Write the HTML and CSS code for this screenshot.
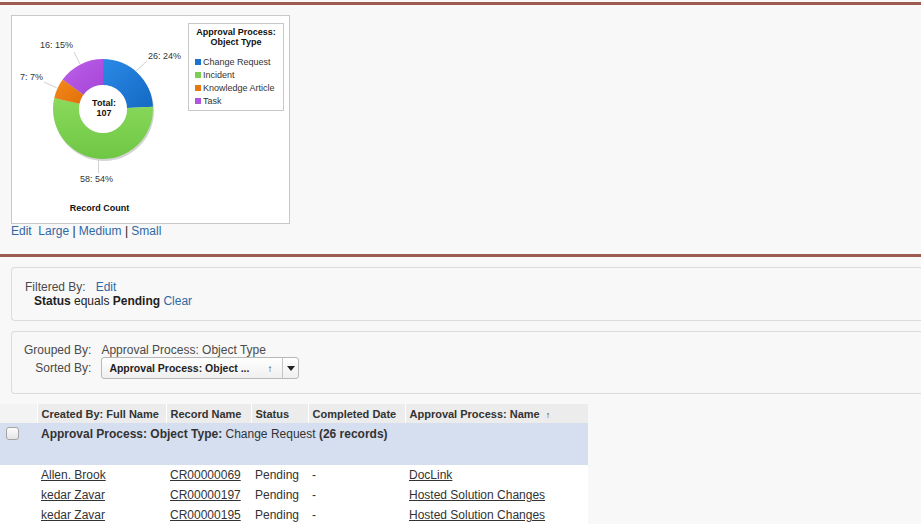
FILE: index.html
```html
<!DOCTYPE html>
<html>
<head>
<meta charset="utf-8">
<link rel="stylesheet" href="styles.css">
</head>
<body>
<div class="chart-panel">
  <div class="chart-box">
    <svg class="chart" width="277" height="207" viewBox="0 0 277 207">
      <defs>
        <linearGradient id="gBlue" x1="0" y1="0" x2="1" y2="1">
          <stop offset="0" stop-color="#2a8ae6"/><stop offset="1" stop-color="#1469c4"/>
        </linearGradient>
        <linearGradient id="gGreen" x1="0" y1="0" x2="0" y2="1">
          <stop offset="0" stop-color="#8ad95c"/><stop offset="1" stop-color="#6fc744"/>
        </linearGradient>
        <linearGradient id="gOrange" x1="0" y1="0" x2="1" y2="1">
          <stop offset="0" stop-color="#f58a1e"/><stop offset="1" stop-color="#e06f06"/>
        </linearGradient>
        <linearGradient id="gPurple" x1="0" y1="0" x2="1" y2="1">
          <stop offset="0" stop-color="#bd61ea"/><stop offset="1" stop-color="#a444d6"/>
        </linearGradient>
      </defs>
      <circle cx="92" cy="95" r="50" fill="#d4d4d4"/>
      <path d="M91,43 A50,50 0 0 1 140.95,90.80 L114.98,91.94 A24,24 0 0 0 91,69 Z" fill="url(#gBlue)"/>
      <path d="M140.95,90.80 A50,50 0 1 1 42.20,82.09 L67.58,87.76 A24,24 0 1 0 114.98,91.94 Z" fill="url(#gGreen)"/>
      <path d="M42.20,82.09 A50,50 0 0 1 50.65,63.47 L71.63,78.83 A24,24 0 0 0 67.58,87.76 Z" fill="url(#gOrange)"/>
      <path d="M50.65,63.47 A50,50 0 0 1 91,43 L91,69 A24,24 0 0 0 71.63,78.83 Z" fill="url(#gPurple)"/>
      <circle cx="91" cy="93" r="24" fill="#ffffff"/>
      <g stroke="#d0d0d0" stroke-width="1" fill="none">
        <line x1="124" y1="55" x2="135" y2="45"/>
        <line x1="62" y1="36" x2="68" y2="48"/>
        <line x1="32" y1="66" x2="45" y2="72"/>
        <line x1="86.5" y1="143" x2="86.5" y2="157"/>
      </g>
      <g class="lbl">
        <text x="136" y="43">26: 24%</text>
        <text x="28" y="32">16: 15%</text>
        <text x="8" y="64">7: 7%</text>
        <text x="68" y="166">58: 54%</text>
      </g>
      <g class="bold mid">
        <text x="92" y="90">Total:</text>
        <text x="92" y="100">107</text>
        <text x="87.5" y="195">Record Count</text>
      </g>
      <rect x="176.5" y="7.5" width="95" height="87" fill="#fff" stroke="#c8c8c8"/>
      <g class="bold mid">
        <text x="224" y="19">Approval Process:</text>
        <text x="224" y="29">Object Type</text>
      </g>
      <rect x="183" y="43" width="6" height="6" fill="#1a73cf"/>
      <rect x="183" y="56" width="6" height="6" fill="#7bcf52"/>
      <rect x="183" y="69" width="6" height="6" fill="#e8780c"/>
      <rect x="183" y="82" width="6" height="6" fill="#b154df"/>
      <g class="lbl">
        <text x="191" y="49">Change Request</text>
        <text x="191" y="62">Incident</text>
        <text x="191" y="75">Knowledge Article</text>
        <text x="191" y="88">Task</text>
      </g>
    </svg>
  </div>
  <div class="size-links">
    <a class="link">Edit</a>&nbsp; <a class="link">Large</a> | <a class="link">Medium</a> | <a class="link">Small</a>
  </div>
</div>

<div class="box filter-box">
  <div class="filter-line"><span class="label">Filtered By:</span><a class="link">Edit</a></div>
  <div class="filter-cond"><b>Status</b> equals <b>Pending</b> <a class="link">Clear</a></div>
</div>

<div class="box group-box">
  <div class="opt-grid">
    <span class="label">Grouped By:</span>
    <span class="value">Approval Process: Object Type</span>
    <span class="label">Sorted By:</span>
    <div class="select">
      <div class="select-main"><span>Approval Process: Object ...</span><span class="sort-up">↑</span></div>
      <div class="select-arrow"><span class="tri"></span></div>
    </div>
  </div>
</div>

<table class="report">
  <colgroup>
    <col style="width:37px"><col style="width:129px"><col style="width:85px"><col style="width:57px"><col style="width:97px"><col style="width:183px">
  </colgroup>
  <thead>
    <tr>
      <th class="th-check"></th>
      <th>Created By: Full Name</th>
      <th>Record Name</th>
      <th>Status</th>
      <th>Completed Date</th>
      <th class="sorted">Approval Process: Name <span class="arrow">↑</span></th>
    </tr>
  </thead>
  <tbody>
    <tr class="group-row">
      <td class="cb-cell"><span class="checkbox"></span></td>
      <td colspan="5"><b>Approval Process: Object Type:</b> Change Request <b>(26 records)</b></td>
    </tr>
    <tr class="data-row">
      <td></td><td><a class="rec">Allen. Brook</a></td><td><a class="rec">CR00000069</a></td><td>Pending</td><td>-</td><td><a class="rec">DocLink</a></td>
    </tr>
    <tr class="data-row">
      <td></td><td><a class="rec">kedar Zavar</a></td><td><a class="rec">CR00000197</a></td><td>Pending</td><td>-</td><td><a class="rec">Hosted Solution Changes</a></td>
    </tr>
    <tr class="data-row">
      <td></td><td><a class="rec">kedar Zavar</a></td><td><a class="rec">CR00000195</a></td><td>Pending</td><td>-</td><td><a class="rec">Hosted Solution Changes</a></td>
    </tr>
  </tbody>
</table>
</body>
</html>
```
FILE: styles.css
```css
html, body {
  margin: 0;
  padding: 0;
  overflow: hidden;
}
body {
  background: #f8f8f8;
  font-family: "Liberation Sans", Arial, sans-serif;
  font-size: 12px;
  color: #333;
}
.link {
  color: #2f68a5;
  text-decoration: none;
}
.chart-panel {
  margin-top: 2px;
  border-top: 3px solid #9c5b4e;
  border-bottom: 3px solid #9c5b4e;
  padding: 10px 0 15px 11px;
}
.chart-box {
  width: 277px;
  height: 207px;
  border: 1px solid #c8c8c8;
  background: #fff;
}
.chart {
  display: block;
  font-family: "Liberation Sans", Arial, sans-serif;
  font-size: 9px;
}
.chart .lbl text {
  fill: #333;
}
.chart .bold text {
  font-weight: bold;
  fill: #111;
}
.chart .mid text {
  text-anchor: middle;
}
.size-links {
  line-height: 15px;
  height: 15px;
  color: #222;
}
.box {
  margin-left: 11px;
  border: 1px solid #dcdcdc;
  border-right: 0;
  border-radius: 4px 0 0 4px;
}
.filter-box {
  margin-top: 10px;
  height: 52px;
  box-sizing: content-box;
  padding: 0 0 0 13px;
}
.filter-line {
  margin-top: 12px;
  line-height: 14px;
}
.filter-line .label {
  color: #4a4a4a;
  margin-right: 10px;
}
.filter-cond {
  line-height: 14px;
  padding-left: 9px;
  color: #222;
}
.group-box {
  margin-top: 10px;
  padding: 11px 0 14px 12px;
}
.opt-grid {
  display: grid;
  grid-template-columns: max-content max-content;
  column-gap: 10px;
  justify-content: start;
  align-items: center;
}
.opt-grid .label {
  text-align: right;
  color: #4a4a4a;
  line-height: 14px;
  white-space: nowrap;
}
.opt-grid .value {
  color: #4a4a4a;
  line-height: 14px;
  white-space: nowrap;
}
.select {
  display: flex;
  height: 22px;
  box-sizing: border-box;
  border: 1px solid #b8b8b8;
  border-radius: 3px;
  background: linear-gradient(#ffffff, #efefef);
  width: 198px;
}
.select-main {
  width: 180px;
  display: flex;
  align-items: center;
  justify-content: space-between;
  padding: 0 10px 0 7px;
  box-sizing: border-box;
  font-weight: bold;
  color: #222;
  font-size: 10.5px;
  white-space: nowrap;
}
.sort-up {
  font-size: 10px;
  font-weight: normal;
}
.select-arrow {
  flex: 1;
  border-left: 1px solid #c4c4c4;
  display: flex;
  align-items: center;
  justify-content: center;
}
.tri {
  width: 0;
  height: 0;
  border-left: 4px solid transparent;
  border-right: 4px solid transparent;
  border-top: 5px solid #222;
}
.report {
  margin-top: 10px;
  border-collapse: collapse;
  table-layout: fixed;
  width: 588px;
}
.report th {
  height: 19px;
  padding: 0 0 0 4px;
  background: #ececec;
  border-left: 1px solid #fff;
  text-align: left;
  font-size: 11px;
  font-weight: bold;
  color: #333;
  white-space: nowrap;
}
.report th.th-check {
  background: #f3f3f3;
  border-left: 0;
}
.report th .arrow {
  font-size: 9px;
  margin-left: 3px;
}
.group-row td {
  height: 42px;
  box-sizing: border-box;
  background: #d6dff0;
  vertical-align: top;
  padding: 4px 0 0 4px;
  line-height: 14px;
  color: #333;
  white-space: nowrap;
}
.group-row td.cb-cell {
  padding: 4px 0 0 6px;
}
.checkbox {
  display: block;
  width: 11px;
  height: 11px;
  border: 1px solid #a4a4a4;
  border-radius: 3px;
  background: linear-gradient(#fdfdfd, #e4e4e4);
}
.data-row td {
  height: 20px;
  padding: 0 0 0 4px;
  background: #fff;
  line-height: 14px;
  white-space: nowrap;
  color: #333;
}
.rec {
  color: #333;
  text-decoration: underline;
}
```
